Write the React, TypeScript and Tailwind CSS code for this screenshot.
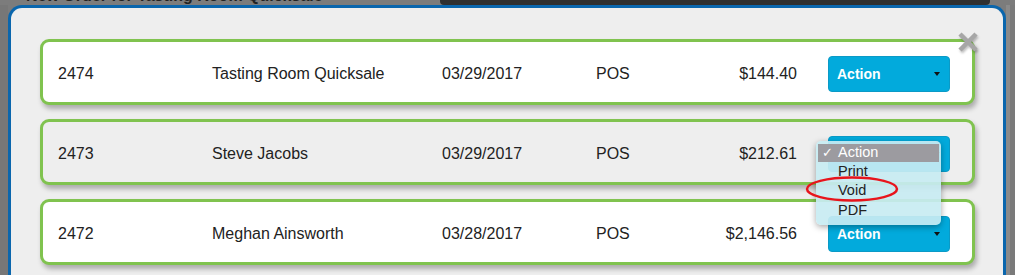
import React from "react";

const rows = [
  { id: "2474", name: "Tasting Room Quicksale", date: "03/29/2017", type: "POS", amount: "$144.40", bg: "bg-white" },
  { id: "2473", name: "Steve Jacobs", date: "03/29/2017", type: "POS", amount: "$212.61", bg: "bg-[#eeeeee]" },
  { id: "2472", name: "Meghan Ainsworth", date: "03/28/2017", type: "POS", amount: "$2,146.56", bg: "bg-white" },
];

function ActionButton() {
  return (
    <div className="flex h-[36px] w-[122px] items-center justify-between rounded-[4px] border border-[#0b9ac6] bg-[#02aadc] pl-[8px] pr-[9px] text-[14px] font-bold text-white">
      <span>Action</span>
      <span className="h-0 w-0 border-x-[3px] border-t-[4px] border-x-transparent border-t-[#111]" />
    </div>
  );
}

export default function App() {
  return (
    <div
      className="relative h-[275px] w-[1015px] overflow-hidden bg-[#7c7c7c]"
      style={{ fontFamily: '"Liberation Sans", Arial, sans-serif' }}
    >
      {/* page behind the modal */}
      <div className="flex h-[5px] overflow-hidden">
        <div className="w-[440px] pl-[26px]">
          <div className="-mt-[16px] text-[16px] font-bold text-[#222]">New Order for Tasting Room Quicksale</div>
        </div>
        <div className="h-[5px] w-[550px] rounded-b-[4px] bg-[#2f2f2f]" />
      </div>

      <div className="flex">
        <div className="w-[8px] bg-[#777]" />
        {/* modal */}
        <div className="h-[270px] w-[998px] rounded-t-[14px] border-x-[3px] border-t-[3px] border-[#0a66ad] bg-[#eeeeee] pl-[29px] pr-[28px] pt-[31px]">
          <div className="flex flex-col gap-[14px]">
            {rows.map((r) => (
              <div
                key={r.id}
                className={`flex h-[66px] items-center rounded-[9px] border-[3px] border-[#80c34f] ${r.bg} pl-[15px] pt-[4px] text-[16px] text-[#222] shadow-[2px_4px_5px_rgba(0,0,0,0.28)]`}
              >
                <div className="w-[154px]">{r.id}</div>
                <div className="w-[230px]">{r.name}</div>
                <div className="w-[154px]">{r.date}</div>
                <div className="w-[100px]">{r.type}</div>
                <div className="w-[101px] text-right">{r.amount}</div>
                <div className="ml-[31px]">
                  <ActionButton />
                </div>
              </div>
            ))}
          </div>
        </div>
        <div className="flex flex-1">
          <div className="w-[4px] bg-[#8a8a8a]" />
          <div className="flex-1 bg-[#7a7a7a]" />
        </div>
      </div>

      {/* close X */}
      <svg className="absolute left-[956px] top-[30px]" width="25" height="25" viewBox="0 0 25 25">
        <g style={{ filter: "drop-shadow(1px 2px 1px rgba(0,0,0,0.25))" }}>
          <path d="M4 4 L20 20 M20 4 L4 20" stroke="#a6a6a6" strokeWidth="4.5" strokeLinecap="butt" />
        </g>
      </svg>

      {/* dropdown menu */}
      <div className="absolute left-[816px] top-[141px] h-[84px] w-[125px] rounded-[5px] bg-[rgba(200,236,242,0.92)] pt-[3px] text-[14.5px] text-[#222] shadow-[0_2px_6px_rgba(0,0,0,0.35)]">
        <div className="mx-[2px] flex h-[18px] items-center bg-[#9c9ba0] text-white">
          <span className="w-[20px] pl-[4px] text-[13px]">✓</span>
          <span>Action</span>
        </div>
        <div className="flex h-[19.5px] items-center pl-[22px]">Print</div>
        <div className="flex h-[19.5px] items-center pl-[22px]">Void</div>
        <div className="flex h-[19.5px] items-center pl-[22px]">PDF</div>
      </div>

      {/* red circle annotation */}
      <svg className="absolute left-[804px] top-[174px]" width="98" height="30" viewBox="0 0 98 30">
        <ellipse cx="48" cy="15" rx="45" ry="11.5" fill="none" stroke="#e8141c" strokeWidth="2.5" />
      </svg>
    </div>
  );
}
